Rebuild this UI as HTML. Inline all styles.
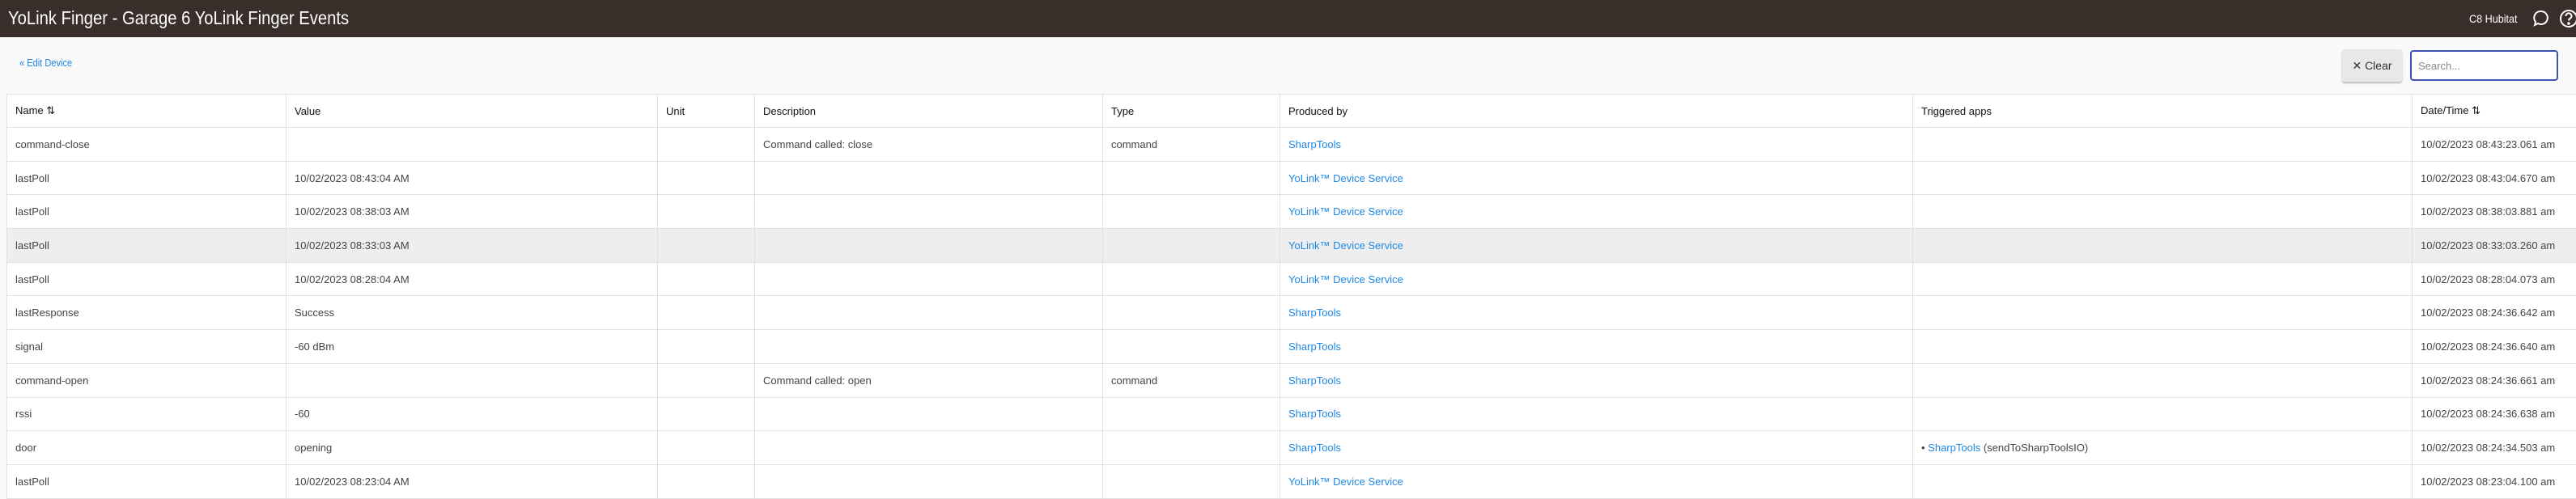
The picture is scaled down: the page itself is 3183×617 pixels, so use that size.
<!DOCTYPE html>
<html><head><meta charset="utf-8"><style>
*{box-sizing:border-box;margin:0;padding:0}
body{width:3183px;height:592px;overflow:hidden;background:#f9f9f9;font-family:"Liberation Sans",sans-serif;position:relative}
.top{position:absolute;left:0;top:0;width:3183px;height:46px;background:#3a2e2b;color:#fff;overflow:hidden}
.title{position:absolute;left:10px;top:9px;font-size:23px;white-space:nowrap;transform:scaleX(.88);transform-origin:left}
.hub{position:absolute;left:3051px;top:15px;font-size:14px;transform:scaleX(.9);transform-origin:left}
.edit{position:absolute;left:24px;top:70px;font-size:13px;color:#1e88e5;transform:scaleX(.85);transform-origin:left}
.clear{position:absolute;left:2894px;top:61px;width:74px;height:40px;background:#e8e8e8;border-radius:3px;box-shadow:0 2px 2px rgba(0,0,0,.25);font-size:14px;color:#333;line-height:40px;text-align:center}
.search{position:absolute;left:2978px;top:62px;width:183px;height:38px;border:2px solid #3f51b5;border-radius:4px;background:#fff;font-size:13px;color:#888;padding:10px 8px}
table{position:absolute;left:8px;top:116px;border-collapse:collapse;table-layout:fixed;width:3300px;background:#fff;font-size:13px;color:#444}
td,th{border:1px solid #e0e0e0;padding:0 10px;white-space:nowrap;overflow:hidden;text-align:left;height:41.7px}
th{font-weight:normal;color:#111;height:41px}
tr.hl td{background:#eeeeee}
a{color:#1e88e5;text-decoration:none}
</style></head><body>
<div class="top"><div class="title">YoLink Finger - Garage 6 YoLink Finger Events</div>
<div class="hub">C8 Hubitat</div>
<svg style="position:absolute;left:3128px;top:11px" width="24" height="24" viewBox="0 0 24 24" fill="none" stroke="#fff" stroke-width="2"><path d="M12 3a8 8 0 1 1-4 15l-4 2 1-4A8 8 0 0 1 12 3z"/></svg>
<svg style="position:absolute;left:3161px;top:10px" width="26" height="26" viewBox="0 0 26 26" fill="none" stroke="#fff" stroke-width="2"><circle cx="13" cy="13" r="10"/><path d="M9.5 10a3.5 3.5 0 1 1 5 3c-1 .6-1.5 1.2-1.5 2.5"/><circle cx="13" cy="19" r=".8" fill="#fff"/></svg>
</div>
<div class="edit">« Edit Device</div>
<div class="clear">✕ Clear</div>
<div class="search">Search...</div>
<table>
<colgroup><col style="width:345px"><col style="width:459px"><col style="width:120px"><col style="width:430px"><col style="width:219px"><col style="width:782px"><col style="width:617px"><col style="width:328px"></colgroup>
<tr><th>Name ⇅</th><th>Value</th><th>Unit</th><th>Description</th><th>Type</th><th>Produced by</th><th>Triggered apps</th><th>Date/Time ⇅</th></tr>
<tr><td>command-close</td><td></td><td></td><td>Command called: close</td><td>command</td><td><a>SharpTools</a></td><td></td><td>10/02/2023 08:43:23.061 am</td></tr>
<tr><td>lastPoll</td><td>10/02/2023 08:43:04 AM</td><td></td><td></td><td></td><td><a>YoLink™ Device Service</a></td><td></td><td>10/02/2023 08:43:04.670 am</td></tr>
<tr><td>lastPoll</td><td>10/02/2023 08:38:03 AM</td><td></td><td></td><td></td><td><a>YoLink™ Device Service</a></td><td></td><td>10/02/2023 08:38:03.881 am</td></tr>
<tr class="hl"><td>lastPoll</td><td>10/02/2023 08:33:03 AM</td><td></td><td></td><td></td><td><a>YoLink™ Device Service</a></td><td></td><td>10/02/2023 08:33:03.260 am</td></tr>
<tr><td>lastPoll</td><td>10/02/2023 08:28:04 AM</td><td></td><td></td><td></td><td><a>YoLink™ Device Service</a></td><td></td><td>10/02/2023 08:28:04.073 am</td></tr>
<tr><td>lastResponse</td><td>Success</td><td></td><td></td><td></td><td><a>SharpTools</a></td><td></td><td>10/02/2023 08:24:36.642 am</td></tr>
<tr><td>signal</td><td>-60 dBm</td><td></td><td></td><td></td><td><a>SharpTools</a></td><td></td><td>10/02/2023 08:24:36.640 am</td></tr>
<tr><td>command-open</td><td></td><td></td><td>Command called: open</td><td>command</td><td><a>SharpTools</a></td><td></td><td>10/02/2023 08:24:36.661 am</td></tr>
<tr><td>rssi</td><td>-60</td><td></td><td></td><td></td><td><a>SharpTools</a></td><td></td><td>10/02/2023 08:24:36.638 am</td></tr>
<tr><td>door</td><td>opening</td><td></td><td></td><td></td><td><a>SharpTools</a></td><td>• <a>SharpTools</a> (sendToSharpToolsIO)</td><td>10/02/2023 08:24:34.503 am</td></tr>
<tr><td>lastPoll</td><td>10/02/2023 08:23:04 AM</td><td></td><td></td><td></td><td><a>YoLink™ Device Service</a></td><td></td><td>10/02/2023 08:23:04.100 am</td></tr>
</table>
</body></html>
